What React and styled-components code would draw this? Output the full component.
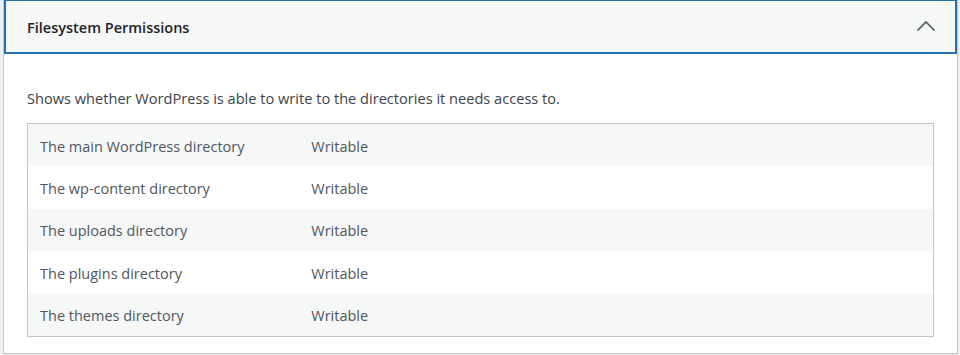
import React from "react";
import styled, { createGlobalStyle } from "styled-components";

const Global = createGlobalStyle`
  html, body { margin: 0; padding: 0; background: #f0f0f1; }
  body { font-family: "Open Sans", "Noto Sans", sans-serif; }
`;

const Page = styled.div`
  width: 960px;
  height: 355px;
  overflow: hidden;
  padding: 0 2px 0 3px;
  box-sizing: border-box;
`;

const Panel = styled.section`
  margin-top: -2px;
  border: 1px solid #c3c4c7;
  background: #fff;
`;

const Header = styled.button`
  display: flex;
  align-items: center;
  justify-content: space-between;
  width: 100%;
  height: 55px;
  padding: 2px 21px 0 23px;
  border: 0;
  background: #f6f7f7;
  box-shadow: inset 0 0 0 2px #2271b1;
  font-family: inherit;
  cursor: pointer;
  box-sizing: border-box;
`;

const Title = styled.span`
  font-size: 14.5px;
  font-weight: 600;
  color: #1d2327;
`;

const Chevron = styled.svg`
  margin-top: -3px;
`;

const Body = styled.div`
  padding: 33px 23px 16px 23px;
`;

const Desc = styled.p`
  margin: 0 0 14px 0;
  font-size: 14.6px;
  line-height: 22px;
  color: #3c434a;
`;

const Table = styled.table`
  width: 100%;
  border: 1px solid #c3c4c7;
  border-collapse: collapse;
  table-layout: fixed;
`;

const Row = styled.tr`
  height: 42.5px;
  background: ${(p) => (p.$odd ? "#f6f7f7" : "#fff")};
`;

const Cell = styled.td`
  padding: 2px 12px 0 12px;
  font-size: 14.5px;
  color: #50575e;
  width: ${(p) => p.$w || "auto"};
  box-sizing: border-box;
`;

const rows = [
  "The main WordPress directory",
  "The wp-content directory",
  "The uploads directory",
  "The plugins directory",
  "The themes directory",
];

export default function App() {
  return (
    <Page>
      <Global />
      <Panel>
        <Header aria-expanded="true">
          <Title>Filesystem Permissions</Title>
          <Chevron width="20" height="12" viewBox="0 0 20 12" fill="none">
            <path d="M1.5 10.5 L10 2 L18.5 10.5" stroke="#50575e" strokeWidth="1.6" />
          </Chevron>
        </Header>
        <Body>
          <Desc>Shows whether WordPress is able to write to the directories it needs access to.</Desc>
          <Table>
            <tbody>
              {rows.map((r, i) => (
                <Row key={r} $odd={i % 2 === 0}>
                  <Cell $w="30%">{r}</Cell>
                  <Cell>Writable</Cell>
                </Row>
              ))}
            </tbody>
          </Table>
        </Body>
      </Panel>
    </Page>
  );
}
